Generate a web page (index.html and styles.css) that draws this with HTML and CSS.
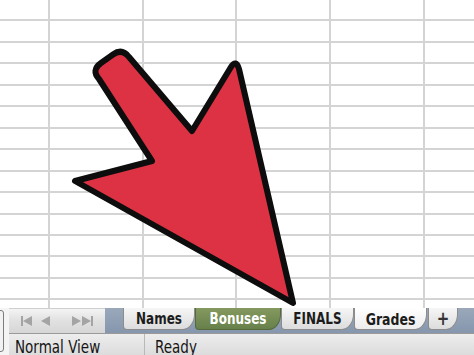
FILE: index.html
```html
<!DOCTYPE html>
<html>
<head>
<meta charset="utf-8">
<link rel="stylesheet" href="styles.css">
</head>
<body>
<div class="sheet">
  <div class="grid">
    <div class="c"></div><div class="c"></div><div class="c"></div><div class="c"></div><div class="c"></div><div class="c"></div>
    <div class="c"></div><div class="c"></div><div class="c"></div><div class="c"></div><div class="c"></div><div class="c"></div>
    <div class="c"></div><div class="c"></div><div class="c"></div><div class="c"></div><div class="c"></div><div class="c"></div>
    <div class="c"></div><div class="c"></div><div class="c"></div><div class="c"></div><div class="c"></div><div class="c"></div>
    <div class="c"></div><div class="c"></div><div class="c"></div><div class="c"></div><div class="c"></div><div class="c"></div>
    <div class="c"></div><div class="c"></div><div class="c"></div><div class="c"></div><div class="c"></div><div class="c"></div>
    <div class="c"></div><div class="c"></div><div class="c"></div><div class="c"></div><div class="c"></div><div class="c"></div>
    <div class="c"></div><div class="c"></div><div class="c"></div><div class="c"></div><div class="c"></div><div class="c"></div>
    <div class="c"></div><div class="c"></div><div class="c"></div><div class="c"></div><div class="c"></div><div class="c"></div>
    <div class="c"></div><div class="c"></div><div class="c"></div><div class="c"></div><div class="c"></div><div class="c"></div>
    <div class="c"></div><div class="c"></div><div class="c"></div><div class="c"></div><div class="c"></div><div class="c"></div>
    <div class="c"></div><div class="c"></div><div class="c"></div><div class="c"></div><div class="c"></div><div class="c"></div>
    <div class="c"></div><div class="c"></div><div class="c"></div><div class="c"></div><div class="c"></div><div class="c"></div>
    <div class="c"></div><div class="c"></div><div class="c"></div><div class="c"></div><div class="c"></div><div class="c"></div>
    <div class="c"></div><div class="c"></div><div class="c"></div><div class="c"></div><div class="c"></div><div class="c"></div>
  </div>

  <div class="bottom">
    <div class="stub"><div class="stub-box"></div></div>
    <div class="bars">
      <div class="tabbar">
        <div class="nav">
          <svg width="96" height="23" viewBox="0 0 96 23">
            <g fill="#a4a4a4">
              <rect x="12" y="6" width="2" height="10"/>
              <path d="M14 11 L23 6 L23 16 Z"/>
              <path d="M32 11 L41 6 L41 16 Z"/>
              <path d="M63 6 L72 11 L63 16 Z"/>
              <path d="M73 6 L82 11 L73 16 Z"/>
              <rect x="82" y="6" width="2" height="10"/>
            </g>
          </svg>
        </div>
        <div class="tabs">
          <div class="tab names"><span class="lbl">Names</span></div>
          <div class="tab green bonuses"><span class="lbl">Bonuses</span></div>
          <div class="tab finals"><span class="lbl">FINALS</span></div>
          <div class="tab active grades"><span class="lbl">Grades</span></div>
          <div class="tab plus"><span class="lbl">+</span></div>
        </div>
      </div>
      <div class="status">
        <div class="st-left"><span class="lbl">Normal View</span></div>
        <div class="st-right"><span class="lbl">Ready</span></div>
      </div>
    </div>
  </div>

  <svg class="arrow" width="474" height="355" viewBox="0 0 474 355">
    <path d="M99 79 Q91 70 101 63 L113 54.5 Q122 48 129 57 L192 131 L231 67 Q236 59 239 69 L293 303 L75 181 L152 161 Z"
          fill="#dc3243" stroke="#0d0d0d" stroke-width="6" stroke-linejoin="round"/>
  </svg>
</div>
</body>
</html>
```

FILE: styles.css
```css
html, body {
  margin: 0;
  padding: 0;
  background: #ffffff;
}

.sheet {
  position: relative;
  width: 474px;
  height: 355px;
  overflow: hidden;
  display: flex;
  flex-direction: column;
  font-family: "DejaVu Sans", "Liberation Sans", sans-serif;
}

.grid {
  height: 308px;
  overflow: hidden;
  display: grid;
  grid-template-columns: 48px 92px 91px 92px 92px 1fr;
  grid-auto-rows: 19.46px;
  gap: 2px;
  background: #d4d4d4;
  flex: none;
}

.c {
  background: #ffffff;
}

.bottom {
  flex: 1;
  display: flex;
  background: #f4f4f4;
}

.stub {
  width: 9px;
  flex: none;
  padding-top: 2px;
  overflow: hidden;
}

.stub-box {
  width: 8px;
  height: 40px;
  margin-left: -6px;
  border: 1px solid #7c7c7c;
  border-radius: 3px;
  background: #f2f2f2;
}

.bars {
  flex: 1;
  display: flex;
  flex-direction: column;
}

.tabbar {
  height: 25px;
  display: flex;
  border-bottom: 1px solid #9a9a9a;
}

.nav {
  width: 96px;
  flex: none;
  padding-top: 1px;
  background: linear-gradient(#f4f4f4 0%, #e2e2e2 45%, #d6d6d6 100%);
  border-top: 1px solid #cfcfcf;
  box-sizing: border-box;
}

.nav svg {
  display: block;
}

.tabs {
  flex: 1;
  display: flex;
  align-items: flex-start;
  padding-left: 18px;
  background: linear-gradient(#9aa8ba, #8596ad);
}

.lbl {
  display: inline-block;
  transform: scaleY(1.3);
}

.tab {
  height: 22px;
  box-sizing: border-box;
  display: flex;
  align-items: center;
  justify-content: center;
  font-size: 12px;
  font-weight: bold;
  color: #1c1c1c;
  background: linear-gradient(#f6f6f6, #dcdcdc);
  border: 1px solid #8c8c8c;
  border-top: none;
  border-radius: 0 0 12px 4px / 0 0 16px 4px;
  padding-top: 1px;
  flex: none;
}

.names { width: 72px; }
.bonuses { width: 86px; }
.finals { width: 73px; }
.grades { width: 73px; font-size: 12.5px; }
.plus { width: 30px; margin-left: 1px; font-size: 15px; color: #333; }

.green {
  color: #ffffff;
  background: linear-gradient(#84995f, #67804a);
  border-color: #56693c;
}

.active {
  background: linear-gradient(#ffffff, #ececec);
}

.status {
  flex: 1;
  display: flex;
  background: linear-gradient(#ededed, #dcdcdc);
  font-size: 13.5px;
  color: #141414;
}

.st-left {
  width: 136px;
  padding-left: 6px;
  box-sizing: border-box;
  border-right: 1px solid #b8b8b8;
  display: flex;
  align-items: center;
  padding-top: 3px;
}

.st-right {
  flex: 1;
  padding-left: 10px;
  display: flex;
  align-items: center;
  padding-top: 3px;
}

.arrow {
  position: absolute;
  left: 0;
  top: 0;
  pointer-events: none;
}
```
